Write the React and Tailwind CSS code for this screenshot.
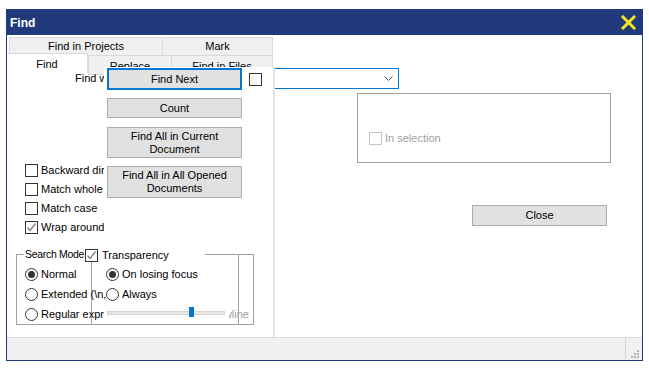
import React from "react";

function Check({ checked, disabled }) {
  return (
    <span
      className={`relative block w-[13px] h-[13px] shrink-0 border bg-white ${
        disabled ? "border-[#c5c5c5]" : "border-[#333333]"
      }`}
    >
      {checked && (
        <svg className="absolute left-0 top-0" width="11" height="11" viewBox="0 0 11 11">
          <path d="M1.5 5.5 L4 8.5 L9.5 1.5" fill="none" stroke="#7a7a7a" strokeWidth="1.3" />
        </svg>
      )}
    </span>
  );
}

function Radio({ checked }) {
  return (
    <span className="flex items-center justify-center w-[13px] h-[13px] shrink-0 rounded-full border border-[#333333] bg-white">
      {checked && <span className="block w-[7px] h-[7px] rounded-full bg-[#333333]" />}
    </span>
  );
}

function Button({ children, focused, className }) {
  return (
    <div
      className={`flex items-center justify-center text-center leading-[13px] bg-[#e1e1e1] text-black ${
        focused ? "border-2 border-[#0078d7]" : "border border-[#adadad]"
      } ${className}`}
    >
      {children}
    </div>
  );
}

export default function App() {
  return (
    <div className="w-[649px] h-[369px] bg-white pt-[9px] pl-[6px] font-['Liberation_Sans',Arial,sans-serif] text-[11px] text-black">
      <div className="w-[637px] h-[352px] border border-[#203a7c] flex flex-col">
        {/* title bar */}
        <div className="h-[25px] bg-[#203a7c] flex items-center justify-between pl-[3px] pr-[6px]">
          <span className="text-white font-bold text-[12px]">Find</span>
          <svg width="15" height="15" viewBox="0 0 15 15">
            <path d="M2 2 L13 13 M13 2 L2 13" stroke="#f7e51e" strokeWidth="3" strokeLinecap="square" />
          </svg>
        </div>

        {/* body */}
        <div className="relative h-[302px] bg-white overflow-hidden">
          {/* tab strip */}
          <div className="absolute left-[2px] top-[2px] flex">
            <div className="w-[154px] h-[19px] flex items-center justify-center bg-[#f0f0f0] border border-[#d9d9d9]">
              Find in Projects
            </div>
            <div className="w-[110px] h-[19px] flex items-center justify-center bg-[#f0f0f0] border border-l-0 border-[#d9d9d9]">
              Mark
            </div>
          </div>
          <div className="absolute left-[81px] top-[20px] flex">
            <div className="w-[84px] h-[20px] pt-[2px] flex justify-center bg-[#f0f0f0] border border-[#d9d9d9]">
              Replace
            </div>
            <div className="w-[101px] h-[20px] pt-[2px] flex justify-center bg-[#f0f0f0] border border-l-0 border-[#d9d9d9]">
              Find in Files
            </div>
          </div>
          <div className="absolute left-0 top-[18px] w-[81px] h-[20px] bg-white border-t border-r border-[#d9d9d9] flex justify-center pt-[2px]">
            Find
          </div>

          <span className="absolute left-[68px] top-[36px] leading-[14px] whitespace-nowrap">Find what :</span>

          {/* combobox */}
          <div className="absolute left-[200px] top-[33px] w-[192px] h-[21px] border border-[#0078d7] bg-white flex items-center justify-end pr-[5px]">
            <svg width="9" height="6" viewBox="0 0 9 6">
              <path d="M0.5 0.5 L4.5 4.5 L8.5 0.5" fill="none" stroke="#555" strokeWidth="1" />
            </svg>
          </div>

          {/* floating button panel */}
          <div className="absolute left-[97px] top-[32px] w-[169px] h-[270px] bg-white">
            <div className="flex flex-col pl-[3px] pt-[1px]">
              <Button focused className="w-[135px] h-[22px]">Find Next</Button>
              <Button className="w-[135px] h-[20px] mt-[8px]">Count</Button>
              <Button className="w-[135px] h-[31px] mt-[9px]">
                Find All in Current
                <br />
                Document
              </Button>
              <Button className="w-[135px] h-[32px] mt-[8px]">
                Find All in All Opened
                <br />
                Documents
              </Button>
            </div>
            <div className="absolute left-[145px] top-[6px]">
              <Check />
            </div>
          </div>
          <div className="absolute left-[266px] top-[32px] w-[2px] h-[270px] bg-[#e3e3e3]" />

          {/* left options */}
          <div className="absolute left-[18px] top-[129px] w-[79px] flex flex-col gap-[6px] overflow-hidden">
            {[
              ["Backward direction", false],
              ["Match whole word only", false],
              ["Match case", false],
              ["Wrap around", true],
            ].map(([label, on]) => (
              <div key={label} className="flex items-center gap-[3px] h-[13px] whitespace-nowrap">
                <Check checked={on} />
                <span>{label}</span>
              </div>
            ))}
          </div>

          {/* search mode group */}
          <div className="absolute left-[9px] top-[219px] w-[238px] h-[71px] border border-[#a0a0a0]" />
          <span className="absolute left-[17px] top-[212px] px-[1px] bg-white leading-[14px] text-[10.5px] tracking-[-0.3px]">
            Search Mode
          </span>

          {/* transparency group */}
          <div className="absolute left-[84px] top-[219px] w-[148px] h-[71px] border border-[#a0a0a0]" />
          <div className="absolute left-[78px] top-[213px] w-[120px] h-[14px] bg-white flex items-center gap-[4px]">
            <Check checked />
            <span>Transparency</span>
          </div>

          <div className="absolute left-[18px] top-[233px] flex flex-col gap-[7px]">
            <div className="flex items-center gap-[3px] h-[13px] w-[81px] overflow-hidden whitespace-nowrap">
              <Radio checked />
              <span>Normal</span>
            </div>
            <div className="flex items-center gap-[3px] h-[13px] w-[81px] overflow-hidden whitespace-nowrap">
              <Radio />
              <span>Extended (\n, \r, \t, \0, \x...)</span>
            </div>
            <div className="flex items-center gap-[3px] h-[13px] w-[79px] overflow-hidden whitespace-nowrap">
              <Radio />
              <span>Regular expression</span>
            </div>
          </div>

          <div className="absolute left-[99px] top-[233px] flex flex-col gap-[7px]">
            <div className="flex items-center gap-[3px] h-[13px] whitespace-nowrap">
              <Radio checked />
              <span>On losing focus</span>
            </div>
            <div className="flex items-center gap-[3px] h-[13px] whitespace-nowrap">
              <Radio />
              <span>Always</span>
            </div>
          </div>

          {/* slider */}
          <div className="absolute left-[100px] top-[276px] w-[118px] h-[4px] bg-[#e7e7e7] border border-[#d6d6d6]" />
          <div className="absolute left-[182px] top-[272px] w-[5px] h-[10px] bg-[#0078d7]" />
          <div className="absolute left-[222px] top-[272px] w-[20px] h-[14px] overflow-hidden flex justify-end leading-[14px] text-[#a0a0a0] whitespace-nowrap">
            <span>newline</span>
          </div>

          {/* in selection group */}
          <div className="absolute left-[350px] top-[58px] w-[254px] h-[70px] border border-[#a0a0a0] pl-[11px] pt-[36px]">
            <div className="flex items-center gap-[3px] text-[#a0a0a0]">
              <Check disabled />
              <span>In selection</span>
            </div>
          </div>

          <Button className="absolute left-[465px] top-[170px] w-[135px] h-[21px]">Close</Button>
        </div>

        {/* status bar */}
        <div className="h-[23px] border-t border-[#dadada] bg-[#f0f0f0] flex items-stretch justify-end">
          <div className="w-px my-[1px] bg-[#d4d4d4]" />
          <div className="w-[16px] flex items-end justify-end pr-[2px] pb-[1px]">
            <svg width="9" height="9" viewBox="0 0 9 9">
              <rect x="6" y="0" width="2" height="2" fill="#b5b5b5" />
              <rect x="3" y="3" width="2" height="2" fill="#b5b5b5" />
              <rect x="6" y="3" width="2" height="2" fill="#b5b5b5" />
              <rect x="0" y="6" width="2" height="2" fill="#b5b5b5" />
              <rect x="3" y="6" width="2" height="2" fill="#b5b5b5" />
              <rect x="6" y="6" width="2" height="2" fill="#b5b5b5" />
            </svg>
          </div>
        </div>
      </div>
    </div>
  );
}
